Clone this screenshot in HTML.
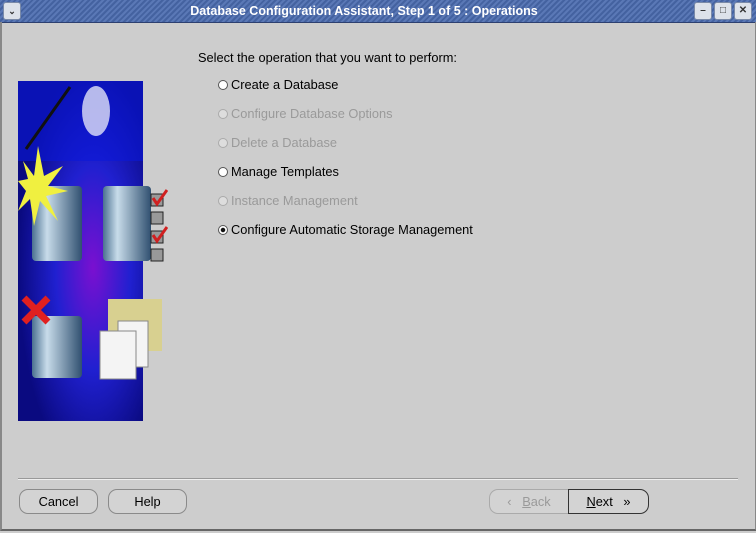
<!DOCTYPE html>
<html><head><style>
body{margin:0;width:756px;height:533px;background:#cdcdcd;font-family:"Liberation Sans",sans-serif;font-size:12.8px;overflow:hidden;position:relative}
.tb{position:absolute;left:0;top:0;width:756px;height:22px;background:repeating-linear-gradient(135deg,#5a78b6 0 2px,#4462a0 2px 4px);border-bottom:1px solid #2d4070}
.tt{position:absolute;left:0;width:728px;top:4px;text-align:center;color:#fff;font-weight:bold;font-size:12.5px}
.wb{position:absolute;top:2px;width:16px;height:16px;background:#dde2ea;border:1px solid #7a8aa8;border-radius:3px;font-size:10px;text-align:center;line-height:16px;color:#333;font-weight:bold}
.frame{position:absolute;left:0;top:22px;width:753px;height:507px;border-left:2px solid #888;border-right:2px solid #888;border-bottom:2px solid #666}
.t{position:absolute;color:#000}
.r{position:absolute;left:218px}
.r i{display:inline-block;width:10px;height:10px;border-radius:50%;background:#fff;border:1px solid #555;vertical-align:-1px;margin-right:3px;box-sizing:border-box}
.d{color:#9a9a9a}.d i{border-color:#aaa;background:#ddd}
.btn{position:absolute;top:489px;height:25px;border:1px solid #8a8a8a;border-radius:9px;text-align:center;line-height:24px;background:#d3d3d3;box-sizing:border-box}
</style></head><body>
<div class="tb"><div class="tt">Database Configuration Assistant, Step 1 of 5 : Operations</div></div>
<div class="wb" style="left:3px;font-size:9px">&#8964;</div>
<div class="wb" style="left:694px">&#8211;</div>
<div class="wb" style="left:714px">&#9633;</div>
<div class="wb" style="left:734px">&#10005;</div>
<div class="frame"></div>
<div class="t" style="left:198px;top:50px">Select the operation that you want to perform:</div>
<div class="r" style="top:77px"><i></i>Create a Database</div>
<div class="r d" style="top:106px"><i></i>Configure Database Options</div>
<div class="r d" style="top:135px"><i></i>Delete a Database</div>
<div class="r" style="top:164px"><i></i>Manage Templates</div>
<div class="r d" style="top:193px"><i></i>Instance Management</div>
<div class="r" style="top:222px"><i style="background:radial-gradient(#111 0 2px,#fff 2.5px)"></i>Configure Automatic Storage Management</div>
<svg style="position:absolute;left:18px;top:81px" width="150" height="340" viewBox="0 0 150 340">
<defs>
<radialGradient id="bg" cx="0.6" cy="0.55" r="0.6"><stop offset="0" stop-color="#7a10d0"/><stop offset="0.5" stop-color="#2020d0"/><stop offset="1" stop-color="#0a0a80"/></radialGradient>
<linearGradient id="cy" x1="0" x2="1"><stop offset="0" stop-color="#4a7090"/><stop offset="0.3" stop-color="#c8dcea"/><stop offset="1" stop-color="#305070"/></linearGradient>
</defs>
<rect width="125" height="340" fill="url(#bg)"/>
<rect width="125" height="80" fill="#0a18d8" opacity="0.6"/>
<ellipse cx="78" cy="30" rx="14" ry="25" fill="#fff" opacity="0.7"/>
<line x1="8" y1="68" x2="52" y2="6" stroke="#111" stroke-width="3"/>
<g fill="url(#cy)"><rect x="14" y="105" width="50" height="75" rx="4"/><rect x="85" y="105" width="48" height="75" rx="4"/><rect x="14" y="235" width="50" height="62" rx="4"/></g>
<polygon points="20,65 26,95 45,85 30,105 50,110 28,115 40,140 22,120 16,145 12,118 0,130 8,110 0,100 10,98 5,80 16,95" fill="#f0f040"/>
<path d="M133 113 h12 v12 h-12z M133 131 h12 v12 h-12z M133 150 h12 v12 h-12z M133 168 h12 v12 h-12z" fill="#999" stroke="#222"/>
<path d="M135 117 l4 6 l10 -14" stroke="#d02020" stroke-width="3" fill="none"/>
<path d="M135 154 l4 6 l10 -14" stroke="#d02020" stroke-width="3" fill="none"/>
<path d="M6 217 l24 24 M30 217 l-24 24" stroke="#e02020" stroke-width="7"/>
<rect x="90" y="218" width="54" height="52" fill="#d8d090"/>
<rect x="100" y="240" width="30" height="46" fill="#f4f4f4" stroke="#888"/>
<rect x="82" y="250" width="36" height="48" fill="#f4f4f4" stroke="#888"/>
</svg>
<div style="position:absolute;left:18px;top:478px;width:720px;height:1px;background:#999;border-bottom:1px solid #eee"></div>
<div class="btn" style="left:19px;width:79px">Cancel</div>
<div class="btn" style="left:108px;width:79px">Help</div>
<div class="btn" style="left:489px;width:80px;color:#9a9a9a;border-color:#aaa;border-radius:9px 0 0 9px">&lsaquo;&nbsp;&nbsp;&nbsp;<u>B</u>ack</div>
<div class="btn" style="left:568px;width:81px;border-color:#333;border-radius:0 9px 9px 0"><u>N</u>ext&nbsp;&nbsp;&nbsp;&raquo;</div>
</body></html>
